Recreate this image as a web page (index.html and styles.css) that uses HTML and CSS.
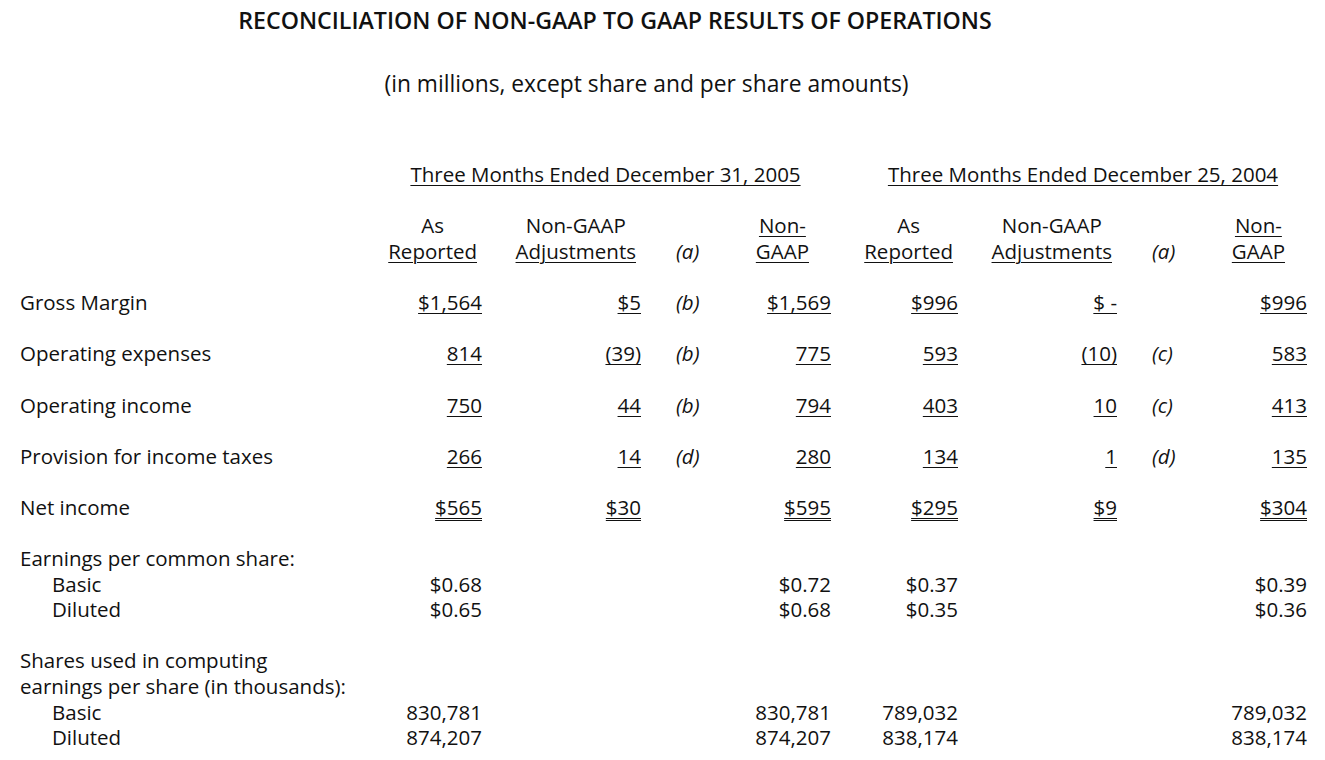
FILE: index.html
```html
<!DOCTYPE html>
<html>
<head>
<meta charset="utf-8">
<link rel="stylesheet" href="styles.css">
</head>
<body>
<div class="page">
  <h1 class="title">RECONCILIATION OF NON-GAAP TO GAAP RESULTS OF OPERATIONS</h1>
  <p class="subtitle">(in millions, except share and per share amounts)</p>

  <div class="row periods">
    <div class="label"></div>
    <div class="period p1"><span class="u">Three Months Ended December 31, 2005</span></div>
    <div class="period p2"><span class="u">Three Months Ended December 25, 2004</span></div>
  </div>

  <div class="row heads">
    <div class="label"></div>
    <div class="num h"><span class="hb">As<br><span class="u">Reported</span></span></div>
    <div class="num h"><span class="hb">Non-GAAP<br><span class="u">Adjustments</span></span></div>
    <div class="note h"><br><i>(a)</i></div>
    <div class="num h hn"><span class="hb"><span class="u">Non-</span><br><span class="u">GAAP</span></span></div>
    <div class="num h"><span class="hb">As<br><span class="u">Reported</span></span></div>
    <div class="num h"><span class="hb">Non-GAAP<br><span class="u">Adjustments</span></span></div>
    <div class="note h"><br><i>(a)</i></div>
    <div class="num h hn"><span class="hb"><span class="u">Non-</span><br><span class="u">GAAP</span></span></div>
  </div>

  <div class="row data">
    <div class="label">Gross Margin</div>
    <div class="num"><span class="u">$1,564</span></div>
    <div class="num"><span class="u">$5</span></div>
    <div class="note"><i>(b)</i></div>
    <div class="num"><span class="u">$1,569</span></div>
    <div class="num"><span class="u">$996</span></div>
    <div class="num"><span class="u">$ -</span></div>
    <div class="note"></div>
    <div class="num"><span class="u">$996</span></div>
  </div>

  <div class="row data">
    <div class="label">Operating expenses</div>
    <div class="num"><span class="u">814</span></div>
    <div class="num"><span class="u">(39)</span></div>
    <div class="note"><i>(b)</i></div>
    <div class="num"><span class="u">775</span></div>
    <div class="num"><span class="u">593</span></div>
    <div class="num"><span class="u">(10)</span></div>
    <div class="note"><i>(c)</i></div>
    <div class="num"><span class="u">583</span></div>
  </div>

  <div class="row data">
    <div class="label">Operating income</div>
    <div class="num"><span class="u">750</span></div>
    <div class="num"><span class="u">44</span></div>
    <div class="note"><i>(b)</i></div>
    <div class="num"><span class="u">794</span></div>
    <div class="num"><span class="u">403</span></div>
    <div class="num"><span class="u">10</span></div>
    <div class="note"><i>(c)</i></div>
    <div class="num"><span class="u">413</span></div>
  </div>

  <div class="row data">
    <div class="label">Provision for income taxes</div>
    <div class="num"><span class="u">266</span></div>
    <div class="num"><span class="u">14</span></div>
    <div class="note"><i>(d)</i></div>
    <div class="num"><span class="u">280</span></div>
    <div class="num"><span class="u">134</span></div>
    <div class="num"><span class="u">1</span></div>
    <div class="note"><i>(d)</i></div>
    <div class="num"><span class="u">135</span></div>
  </div>

  <div class="row data">
    <div class="label">Net income</div>
    <div class="num"><span class="uu">$565</span></div>
    <div class="num"><span class="uu">$30</span></div>
    <div class="note"></div>
    <div class="num"><span class="uu">$595</span></div>
    <div class="num"><span class="uu">$295</span></div>
    <div class="num"><span class="uu">$9</span></div>
    <div class="note"></div>
    <div class="num"><span class="uu">$304</span></div>
  </div>

  <div class="row block">
    <div class="label">Earnings per common share:<br><span class="ind">Basic</span><br><span class="ind">Diluted</span></div>
    <div class="num"><br>$0.68<br>$0.65</div>
    <div class="num"></div>
    <div class="note"></div>
    <div class="num"><br>$0.72<br>$0.68</div>
    <div class="num"><br>$0.37<br>$0.35</div>
    <div class="num"></div>
    <div class="note"></div>
    <div class="num"><br>$0.39<br>$0.36</div>
  </div>

  <div class="row block">
    <div class="label">Shares used in computing<br>earnings per share (in thousands):<br><span class="ind">Basic</span><br><span class="ind">Diluted</span></div>
    <div class="num"><br><br>830,781<br>874,207</div>
    <div class="num"></div>
    <div class="note"></div>
    <div class="num"><br><br>830,781<br>874,207</div>
    <div class="num"><br><br>789,032<br>838,174</div>
    <div class="num"></div>
    <div class="note"></div>
    <div class="num"><br><br>789,032<br>838,174</div>
  </div>
</div>
</body>
</html>
```

FILE: styles.css
```css
html, body {
  margin: 0;
  padding: 0;
  background: #ffffff;
}

body {
  font-family: "Open Sans", "Noto Sans", sans-serif;
  font-size: 20.5px;
  color: #111111;
}

.page {
  width: 1325px;
  padding: 8px 18px 0 20px;
  box-sizing: border-box;
}

.title {
  margin: 0;
  font-size: 23.2px;
  font-weight: 600;
  line-height: 24px;
  text-align: center;
  padding-right: 97px;
}

.subtitle {
  margin: 39px 0 0 0;
  font-size: 22.8px;
  line-height: 25.6px;
  text-align: center;
  padding-right: 34px;
}

.row {
  display: grid;
  grid-template-columns: 360px 102px 159px 70px 120px 127px 159px 70px 120px;
  line-height: 25.6px;
}

.periods {
  margin-top: 65.6px;
  grid-template-columns: 360px 451px 476px;
}

.period {
  text-align: center;
}

.period.p2 {
  padding-left: 28px;
}

.heads {
  margin-top: 25.6px;
}

.data {
  margin-top: 25.6px;
}

.block {
  margin-top: 25.6px;
}

.num {
  text-align: right;
  white-space: nowrap;
}

.num.h {
  padding-right: 5px;
}

.num.h.hn {
  padding-right: 22px;
}

.hb {
  display: inline-block;
  text-align: center;
}

.note {
  padding-left: 35px;
}

.note i {
  font-style: italic;
}

.u {
  text-decoration: underline;
  text-decoration-thickness: 1px;
  text-underline-offset: 3px;
}

.uu {
  text-decoration: underline double;
  text-decoration-thickness: 1px;
  text-underline-offset: 3px;
}

.ind {
  padding-left: 32px;
}
```
